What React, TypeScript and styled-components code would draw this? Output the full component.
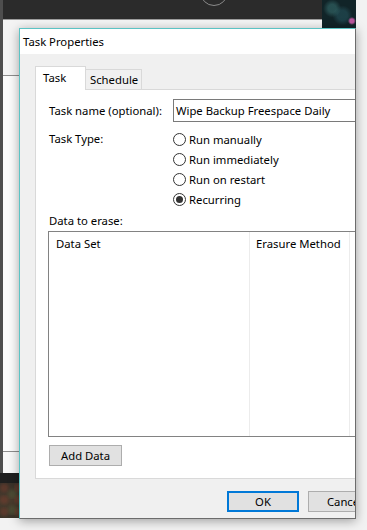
import styled, { createGlobalStyle } from "styled-components";

const UI_SIZE = "11.3px";

const GlobalStyle = createGlobalStyle`
  html, body {
    margin: 0;
    padding: 0;
  }
  body {
    background: #f2f2f2;
    font-family: "Noto Sans", "Liberation Sans", sans-serif;
    font-size: ${UI_SIZE};
    color: #000;
  }
`;

const Desktop = styled.div`
  position: relative;
  width: 367px;
  height: 530px;
  overflow: hidden;
  background: #f2f2f2;
`;

/* window behind the dialog */
const BackWindow = styled.div`
  position: absolute;
  left: 0;
  top: 0;
  width: 322px;
  height: 473px;
  display: flex;
  flex-direction: column;
  background: #f8f8f8;
  border-left: 3px solid #4e4e4e;
  box-sizing: border-box;
`;

const BackTitle = styled.div`
  position: relative;
  height: 19px;
  background: #2b2b2b;
  border-bottom: 1px solid #9c9c9c;
  overflow: hidden;
`;

const Ring = styled.div`
  position: absolute;
  left: 197px;
  top: -22px;
  width: 26px;
  height: 26px;
  border-radius: 50%;
  border: 1px solid #8a8a8a;
`;

const BackToolbar = styled.div`
  height: 55px;
  background: #f4f4f4;
  border-bottom: 1px solid #8d8d8d;
`;

const BackContent = styled.div`
  flex: 1;
  background: #fbfbfb;
  border-bottom: 1px solid #8d8d8d;
`;

const BackFooter = styled.div`
  height: 21px;
  background: #f7f7f7;
`;

const PhotoStrip = styled.div`
  position: absolute;
  left: 0;
  top: 473px;
  width: 322px;
  height: 45px;
  display: flex;
  flex-direction: column;
`;

const DarkBand = styled.div`
  height: 10px;
  background: #1f1f1f;
`;

const Texture = styled.div`
  flex: 1;
  background:
    radial-gradient(circle at 30% 40%, rgba(120, 60, 45, 0.45) 0 2px, transparent 6px),
    radial-gradient(circle at 70% 70%, rgba(85, 95, 60, 0.45) 0 2px, transparent 7px),
    linear-gradient(180deg, #3a3129, #4a3b2d 50%, #3a3328);
  background-size: 14px 12px, 18px 16px, 100% 100%;
`;

const SpaceImage = styled.div`
  position: absolute;
  left: 322px;
  top: 0;
  width: 34px;
  height: 28px;
  background:
    radial-gradient(circle at 88% 75%, #b9569d 0 2px, transparent 4px),
    radial-gradient(circle at 30% 30%, rgba(60, 120, 120, 0.5) 0 4px, transparent 9px),
    radial-gradient(circle at 60% 55%, rgba(40, 90, 100, 0.5) 0 5px, transparent 10px),
    #112428;
`;

/* the dialog */
const Dialog = styled.div`
  position: absolute;
  left: 19px;
  top: 28px;
  width: 337px;
  height: 491px;
  box-sizing: border-box;
  border-top: 1px solid #5cc3c4;
  border-left: 1px solid #5cc3c4;
  border-right: 1px solid #6c6c6c;
  border-bottom: 1px solid #6c6c6c;
  box-shadow: 0 2px 10px rgba(0, 0, 0, 0.35);
  display: flex;
  flex-direction: column;
  align-items: flex-start;
  overflow: hidden;
  background: #f0f0f0;
`;

const TitleBar = styled.div`
  align-self: stretch;
  height: 25px;
  flex-shrink: 0;
  display: flex;
  align-items: center;
  padding-left: 3px;
  background: #fff;
  font-size: ${UI_SIZE};
`;

const Body = styled.div`
  width: 400px;
  flex: 1;
  padding: 12px 0 0 15px;
  box-sizing: border-box;
  background: #f0f0f0;
`;

const TabStrip = styled.div`
  position: relative;
  z-index: 1;
  display: flex;
  align-items: flex-end;
  height: 24px;
  margin-bottom: -1px;
`;

const Tab = styled.div<{ $active?: boolean }>`
  box-sizing: border-box;
  display: flex;
  align-items: center;
  border: 1px solid #d9d9d9;
  ${(p) =>
    p.$active
      ? `
    width: 51px;
    height: 24px;
    padding: 0 0 3px 7px;
    background: #fff;
    border-bottom: none;
  `
      : `
    width: 56px;
    height: 21px;
    padding-left: 4px;
    background: #f0f0f0;
    border-left: none;
  `}
`;

const Panel = styled.div`
  width: 365px;
  box-sizing: border-box;
  border: 1px solid #d9d9d9;
  background: #fff;
  padding: 9px 0 12px 13px;
`;

const FormRow = styled.div<{ $gap?: number }>`
  display: grid;
  grid-template-columns: 124px 1fr;
  margin-top: ${(p) => p.$gap ?? 0}px;
`;

const Label = styled.div<{ $line?: number }>`
  line-height: ${(p) => p.$line ?? 20}px;
`;

const TextInput = styled.div`
  height: 23px;
  box-sizing: border-box;
  border: 1px solid #7a7a7a;
  padding-left: 2px;
  display: flex;
  align-items: center;
  white-space: nowrap;
`;

const RadioList = styled.div`
  display: flex;
  flex-direction: column;
`;

const RadioRow = styled.div`
  height: 20px;
  display: flex;
  align-items: center;
  gap: 3px;
`;

const RadioCircle = styled.span<{ $checked?: boolean }>`
  width: 13px;
  height: 13px;
  box-sizing: border-box;
  border-radius: 50%;
  border: 1px solid #333;
  background: #fff;
  display: flex;
  align-items: center;
  justify-content: center;

  &::after {
    content: "";
    width: 7px;
    height: 7px;
    border-radius: 50%;
    background: #333;
    display: ${(p) => (p.$checked ? "block" : "none")};
  }
`;

const SectionLabel = styled.div`
  margin-top: 4px;
  line-height: 16px;
`;

const ListView = styled.div`
  margin: 2px 0 0 -1px;
  height: 206px;
  box-sizing: border-box;
  border: 1px solid #828282;
  display: grid;
  grid-template-columns: 201px 100px 1fr;
`;

const Column = styled.div<{ $pad: number }>`
  box-sizing: border-box;
  border-right: 1px solid #ececec;
  padding-left: ${(p) => p.$pad}px;
  line-height: 23px;
  white-space: nowrap;

  &:last-child {
    border-right: none;
  }
`;

const Button = styled.div<{ $primary?: boolean; $width?: number }>`
  width: ${(p) => p.$width ?? 73}px;
  height: 21px;
  box-sizing: border-box;
  background: #e1e1e1;
  border: ${(p) => (p.$primary ? "2px solid #0078d7" : "1px solid #adadad")};
  display: flex;
  align-items: center;
  justify-content: center;
  flex-shrink: 0;
`;

const AddButton = styled(Button)`
  margin-top: 8px;
`;

const Footer = styled.div`
  display: flex;
  gap: 9px;
  padding: 12px 0 0 192px;
`;

const taskTypes = [
  { label: "Run manually", checked: false },
  { label: "Run immediately", checked: false },
  { label: "Run on restart", checked: false },
  { label: "Recurring", checked: true },
];

const App = () => {
  return (
    <>
      <GlobalStyle />
      <Desktop>
        <BackWindow>
          <BackTitle>
            <Ring />
          </BackTitle>
          <BackToolbar />
          <BackContent />
          <BackFooter />
        </BackWindow>
        <PhotoStrip>
          <DarkBand />
          <Texture />
        </PhotoStrip>
        <SpaceImage />

        <Dialog>
          <TitleBar>Task Properties</TitleBar>
          <Body>
            <TabStrip>
              <Tab $active>Task</Tab>
              <Tab>Schedule</Tab>
            </TabStrip>
            <Panel>
              <FormRow>
                <Label $line={23}>Task name (optional):</Label>
                <TextInput>Wipe Backup Freespace Daily</TextInput>
              </FormRow>
              <FormRow $gap={7}>
                <Label>Task Type:</Label>
                <RadioList>
                  {taskTypes.map((t) => (
                    <RadioRow key={t.label}>
                      <RadioCircle $checked={t.checked} />
                      {t.label}
                    </RadioRow>
                  ))}
                </RadioList>
              </FormRow>
              <SectionLabel>Data to erase:</SectionLabel>
              <ListView>
                <Column $pad={7}>Data Set</Column>
                <Column $pad={6}>Erasure Method</Column>
                <Column $pad={6} />
              </ListView>
              <AddButton>Add Data</AddButton>
            </Panel>
            <Footer>
              <Button $primary $width={72}>
                OK
              </Button>
              <Button>Cancel</Button>
            </Footer>
          </Body>
        </Dialog>
      </Desktop>
    </>
  );
};

export default App;
